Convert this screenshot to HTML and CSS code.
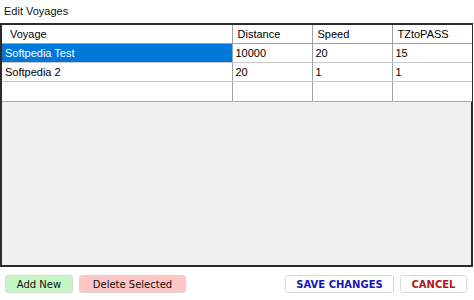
FILE: index.html
```html
<!DOCTYPE html>
<html lang="en">
<head>
<meta charset="UTF-8" />
<title>Edit Voyages</title>
<link rel="stylesheet" href="styles.css">
</head>
<body>
<div class="window">
  <div class="title">Edit Voyages</div>

  <div class="grid-panel">
    <table class="grid">
      <colgroup>
        <col class="col-voyage">
        <col class="col-num">
        <col class="col-num">
        <col class="col-num">
      </colgroup>
      <thead>
        <tr>
          <th class="first">Voyage</th>
          <th>Distance</th>
          <th>Speed</th>
          <th>TZtoPASS</th>
        </tr>
      </thead>
      <tbody>
        <tr>
          <td class="selected">Softpedia Test</td>
          <td>10000</td>
          <td>20</td>
          <td>15</td>
        </tr>
        <tr>
          <td>Softpedia 2</td>
          <td>20</td>
          <td>1</td>
          <td>1</td>
        </tr>
        <tr class="new-row">
          <td></td>
          <td></td>
          <td></td>
          <td></td>
        </tr>
      </tbody>
    </table>
  </div>

  <div class="actions">
    <div class="left-actions">
      <button class="btn btn-add">Add New</button>
      <button class="btn btn-delete">Delete Selected</button>
    </div>
    <div class="right-actions">
      <button class="btn btn-save">SAVE CHANGES</button>
      <button class="btn btn-cancel">CANCEL</button>
    </div>
  </div>
</div>
</body>
</html>
```

FILE: styles.css
```css
body {
  margin: 0;
  background-color: #ffffff;
  font-family: 'Liberation Sans', Arial, sans-serif;
  color: #000;
}

.window {
  width: 474px;
  height: 300px;
  display: flex;
  flex-direction: column;
}

.title {
  height: 23px;
  line-height: 22px;
  padding-left: 4px;
  font-size: 11px;
  color: #111;
}

.grid-panel {
  height: 240px;
  margin: 0 1px 0 0;
  border: 2px solid #2b2b2b;
  background-color: #f0f0f0;
}

.grid {
  border-collapse: collapse;
  table-layout: fixed;
  width: 469px;
  font-size: 11px;
}

.col-voyage {
  width: 230px;
}

.col-num {
  width: 80px;
}

.grid th,
.grid td {
  height: 18px;
  padding: 0 0 0 3px;
  border-right: 1px solid #a0a0a0;
  border-bottom: 1px solid #c8c8c8;
  background-color: #ffffff;
  text-align: left;
  font-weight: normal;
  white-space: nowrap;
  overflow: hidden;
}

.grid th {
  height: 18px;
  padding-left: 5px;
  border-bottom: 1px solid #a0a0a0;
}

.grid th.first {
  padding-left: 8px;
}

.grid tr > :last-child {
  border-right: none;
}

.grid td.selected {
  background-color: #0078d7;
  color: #ffffff;
}

.grid .new-row td {
  height: 19px;
  border-bottom: 1px solid #a8a8a8;
}

.actions {
  display: flex;
  justify-content: space-between;
  padding: 8px 7px 0 5px;
}

.left-actions,
.right-actions {
  display: flex;
  gap: 6px;
}

.btn {
  height: 18px;
  padding: 0 10px;
  border: 1px solid #d8d8d8;
  border-radius: 3px;
  font-family: 'DejaVu Sans', Verdana, sans-serif;
  font-size: 10px;
  background-color: #ffffff;
  color: #111;
}

.btn-add {
  width: 68px;
  background-color: #c4f7c4;
}

.btn-delete {
  width: 107px;
  background-color: #ffc4c4;
}

.btn-save {
  width: 109px;
  font-weight: bold;
  color: #1616b4;
}

.btn-cancel {
  width: 67px;
  font-weight: bold;
  color: #b41616;
}
```
